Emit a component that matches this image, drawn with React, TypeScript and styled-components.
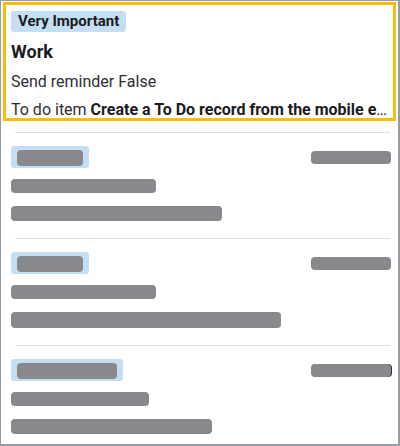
import styled, { createGlobalStyle } from "styled-components";

const GlobalStyle = createGlobalStyle`
  html, body {
    margin: 0;
    padding: 0;
    background: #ffffff;
  }
  * {
    box-sizing: border-box;
  }
`;

const Frame = styled.div`
  width: 400px;
  height: 446px;
  overflow: hidden;
  background: #ffffff;
  border-style: solid;
  border-color: #979ca3;
  border-width: 1px 2px 2px 1px;
  font-family: Roboto, "Liberation Sans", sans-serif;
  display: flex;
  flex-direction: column;
`;

const SelectedCard = styled.div`
  margin: 1px 2px 0 2px;
  border: 3px solid #fbbb0a;
  padding: 6px 2px 0 5px;
  display: flex;
  flex-direction: column;
  min-width: 0;
`;

const Tag = styled.span`
  align-self: flex-start;
  height: 21px;
  line-height: 21px;
  padding: 0 7px;
  border-radius: 3px;
  background: #c4dff3;
  color: #1b1b1f;
  font-size: 15px;
  font-weight: 700;
`;

const Title = styled.div`
  margin-top: 9px;
  font-size: 18px;
  line-height: 21px;
  font-weight: 700;
  color: #1b1b1f;
`;

const Line = styled.div<{ $top: number }>`
  margin-top: ${(p) => p.$top}px;
  font-size: 16px;
  line-height: 19px;
  height: 18px;
  color: #2e2e33;
  white-space: nowrap;
  overflow: hidden;
  text-overflow: ellipsis;
`;

const Strong = styled.b`
  font-weight: 700;
  color: #1b1b1f;
`;

const Divider = styled.div<{ $top?: number }>`
  height: 1px;
  margin: ${(p) => p.$top ?? 0}px 8px 0 14px;
  background: #dedde4;
  flex-shrink: 0;
`;

const SkeletonCard = styled.div`
  padding: 13px 7px 17px 10px;
  display: flex;
  flex-direction: column;
`;

const HeadRow = styled.div`
  display: flex;
  align-items: center;
  justify-content: space-between;
  height: 22px;
`;

const ChipShell = styled.div<{ $w: number }>`
  width: ${(p) => p.$w}px;
  height: 22px;
  padding: 4px 6px 2px 6px;
  border-radius: 3px;
  background: #c4dff3;
  display: flex;
`;

const Bar = styled.div<{ $w?: number; $h: number; $top?: number; $edge?: boolean }>`
  width: ${(p) => (p.$w ? `${p.$w}px` : "100%")};
  height: ${(p) => p.$h}px;
  margin-top: ${(p) => p.$top ?? 0}px;
  border-radius: 4px;
  background: #88888d;
  flex-shrink: 0;
  ${(p) => (p.$edge ? "box-shadow: 1px 0 0 #2b2f3c;" : "")}
`;

type Skeleton = { chip: number; line1: number; line2: number; line2h: number; edge?: boolean };

const skeletons: Skeleton[] = [
  { chip: 78, line1: 145, line2: 211, line2h: 15 },
  { chip: 78, line1: 145, line2: 270, line2h: 16 },
  { chip: 112, line1: 138, line2: 201, line2h: 15, edge: true },
];

export default function App() {
  return (
    <>
      <GlobalStyle />
      <Frame>
        <SelectedCard>
          <Tag>Very Important</Tag>
          <Title>Work</Title>
          <Line $top={10}>Send reminder False</Line>
          <Line $top={10}>
            To do item <Strong>Create a To Do record from the mobile experience</Strong>
          </Line>
        </SelectedCard>
        <Divider $top={11} />
        {skeletons.map((s, i) => (
          <div key={i}>
            {i > 0 && <Divider />}
            <SkeletonCard>
              <HeadRow>
                <ChipShell $w={s.chip}>
                  <Bar $h={16} />
                </ChipShell>
                <Bar $w={80} $h={13} $edge={s.edge} />
              </HeadRow>
              <Bar $w={s.line1} $h={14} $top={11} />
              <Bar $w={s.line2} $h={s.line2h} $top={13} />
            </SkeletonCard>
          </div>
        ))}
      </Frame>
    </>
  );
}
